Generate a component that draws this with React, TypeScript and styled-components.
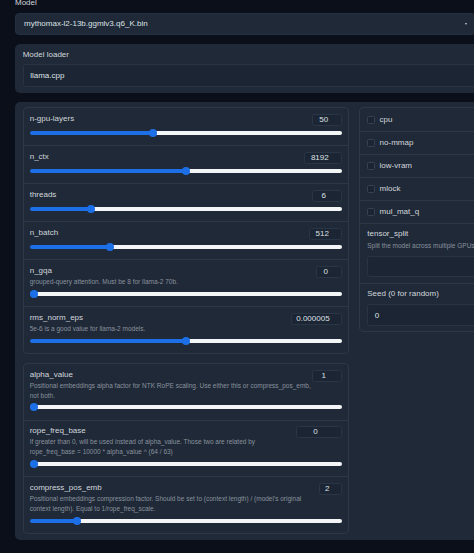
import React, { useState } from 'react';
import styled, { createGlobalStyle } from 'styled-components';

const Global = createGlobalStyle`
  html, body { margin: 0; padding: 0; background: #0b0f19; overflow: hidden; }
  body { font-family: "Liberation Sans", Arial, Helvetica, sans-serif; color: #dfe3e9; }
  * { box-sizing: border-box; }
`;

const BLUE = '#1d6fe8';
const LINE = '#2c3747';

const Page = styled.div`
  width: 640px;
  margin-left: 15px;
  display: flex;
  flex-direction: column;
`;

const TopLabel = styled.div`
  font-size: 8px;
  line-height: 10px;
  margin-top: -1.7px;
  color: #d2d6dc;
`;

const Dropdown = styled.div`
  width: 461px;
  margin-top: 4.4px;
  height: 22.3px;
  border-radius: 4px;
  background: #1f2937;
  border: 1px solid #242f3f;
  display: flex;
  align-items: center;
  justify-content: space-between;
  padding: 0 8px;
  font-size: 8px;
  color: #dde1e6;
`;

const Caret = styled.span`
  width: 0;
  height: 0;
  border-left: 1.8px solid transparent;
  border-right: 1.8px solid transparent;
  border-top: 2.4px solid #d1d5db;
`;

const Block = styled.div`
  margin-top: 9px;
  background: #1f2937;
  border-radius: 5px;
  padding: 6px 0 5.7px 7.7px;
  display: flex;
  flex-direction: column;
`;

const Label = styled.div`
  font-size: 8px;
  line-height: 10px;
  color: #d3d7dd;
  white-space: nowrap;
`;

const Info = styled.div<{ $nowrap?: boolean }>`
  margin-top: 1.2px;
  font-size: 6.5px;
  line-height: 9.8px;
  color: #8a929e;
  white-space: ${p => (p.$nowrap ? 'nowrap' : 'normal')};
`;

const TextInput = styled.div<{ $h: number; $mt: number }>`
  margin-top: ${p => p.$mt}px;
  height: ${p => p.$h}px;
  background: #1c2533;
  border: 1px solid #283345;
  border-radius: 3px;
  display: flex;
  align-items: center;
  padding-left: 6.5px;
  font-size: 8px;
  color: #dde1e6;
`;

const Panel = styled.div`
  margin-top: 9px;
  background: #1f2937;
  border-radius: 5px;
  padding: 5.6px 0 6.3px 7.7px;
  display: flex;
  gap: 10px;
  align-items: flex-start;
`;

const LeftCol = styled.div`
  width: 326.6px;
  flex: none;
  display: flex;
  flex-direction: column;
  gap: 8.7px;
`;

const RightCol = styled.div`
  flex: 1;
  display: flex;
  flex-direction: column;
`;

const Group = styled.div`
  border: 1px solid ${LINE};
  border-radius: 4px;
  display: flex;
  flex-direction: column;
`;

const SliderRowBox = styled.div`
  padding: 5.7px 6px 7.8px 6px;
  display: flex;
  flex-direction: column;
  & + & { border-top: 1px solid ${LINE}; }
`;

const Header = styled.div`
  display: flex;
  align-items: flex-start;
`;

const TextCol = styled.div`
  flex: 1;
  min-width: 0;
  display: flex;
  flex-direction: column;
`;

const NumBox = styled.div<{ $w: number }>`
  flex: none;
  width: ${p => p.$w}px;
  height: 12px;
  border: 1px solid #2a3546;
  border-radius: 2.5px;
  background: #1c2533;
  font-size: 8px;
  line-height: 10px;
  text-align: center;
  padding-right: 7px;
  color: #dde1e6;
`;

const SliderWrap = styled.div`
  margin-top: 2.5px;
  height: 9px;
  display: flex;
  align-items: center;
`;

const Range = styled.input<{ $f: number }>`
  -webkit-appearance: none;
  appearance: none;
  width: 100%;
  height: 3.7px;
  margin: 0;
  border-radius: 2px;
  outline: none;
  background: linear-gradient(
    to right,
    ${BLUE} calc(4px + ${p => p.$f} * (100% - 8px)),
    #f4f5f7 calc(4px + ${p => p.$f} * (100% - 8px))
  );
  &::-webkit-slider-thumb {
    -webkit-appearance: none;
    appearance: none;
    width: 8px;
    height: 8px;
    border-radius: 50%;
    background: ${BLUE};
    border: none;
  }
`;

const CheckRow = styled.label`
  height: 22.5px;
  display: flex;
  align-items: center;
  gap: 4.3px;
  padding-left: 7px;
  font-size: 8px;
  color: #d3d7dd;
  & + & { border-top: 1px solid ${LINE}; height: 23px; }
`;

const Check = styled.input`
  -webkit-appearance: none;
  appearance: none;
  margin: 0;
  width: 8px;
  height: 8px;
  border: 1px solid #364152;
  border-radius: 1.5px;
  background: #1b2432;
`;

const FieldCell = styled.div<{ $pt: number; $pb: number }>`
  border-top: 1px solid ${LINE};
  padding: ${p => p.$pt}px 0 ${p => p.$pb}px 7px;
  display: flex;
  flex-direction: column;
`;

type SliderProps = {
  label: string;
  info?: string;
  value: string;
  w: number;
  f: number;
};

function SliderRow({ label, info, value, w, f }: SliderProps) {
  const [v, setV] = useState(Math.round(f * 1000));
  return (
    <SliderRowBox>
      <Header>
        <TextCol>
          <Label>{label}</Label>
          {info && <Info>{info}</Info>}
        </TextCol>
        <NumBox $w={w}>{value}</NumBox>
      </Header>
      <SliderWrap>
        <Range
          type="range"
          min={0}
          max={1000}
          value={v}
          $f={v / 1000}
          onChange={e => setV(Number(e.target.value))}
        />
      </SliderWrap>
    </SliderRowBox>
  );
}

const mainSliders: SliderProps[] = [
  { label: 'n-gpu-layers', value: '50', w: 30, f: 50 / 128 },
  { label: 'n_ctx', value: '8192', w: 38, f: 0.5 },
  { label: 'threads', value: '6', w: 30, f: 6 / 32 },
  { label: 'n_batch', value: '512', w: 33, f: 0.25 },
  { label: 'n_gqa', info: 'grouped-query attention. Must be 8 for llama-2 70b.', value: '0', w: 26, f: 0 },
  { label: 'rms_norm_eps', info: '5e-6 is a good value for llama-2 models.', value: '0.000005', w: 51.7, f: 0.5 },
];

const ropeSliders: SliderProps[] = [
  {
    label: 'alpha_value',
    info: 'Positional embeddings alpha factor for NTK RoPE scaling. Use either this or compress_pos_emb, not both.',
    value: '1',
    w: 30,
    f: 0,
  },
  {
    label: 'rope_freq_base',
    info: 'If greater than 0, will be used instead of alpha_value. Those two are related by rope_freq_base = 10000 * alpha_value ^ (64 / 63)',
    value: '0',
    w: 46.7,
    f: 0,
  },
  {
    label: 'compress_pos_emb',
    info: "Positional embeddings compression factor. Should be set to (context length) / (model's original context length). Equal to 1/rope_freq_scale.",
    value: '2',
    w: 23.3,
    f: 1 / 7,
  },
];

const flags = ['cpu', 'no-mmap', 'low-vram', 'mlock', 'mul_mat_q'];

export default function App() {
  return (
    <>
      <Global />
      <Page>
        <TopLabel>Model</TopLabel>
        <Dropdown>
          <span>mythomax-l2-13b.ggmlv3.q6_K.bin</span>
          <Caret />
        </Dropdown>
        <Block>
          <Label>Model loader</Label>
          <TextInput $h={23} $mt={4}>llama.cpp</TextInput>
        </Block>
        <Panel>
          <LeftCol>
            <Group>
              {mainSliders.map(s => (
                <SliderRow key={s.label} {...s} />
              ))}
            </Group>
            <Group>
              {ropeSliders.map(s => (
                <SliderRow key={s.label} {...s} />
              ))}
            </Group>
          </LeftCol>
          <RightCol>
            <Group>
              {flags.map(fl => (
                <CheckRow key={fl}>
                  <Check type="checkbox" />
                  {fl}
                </CheckRow>
              ))}
              <FieldCell $pt={5.7} $pb={5.7}>
                <Label>tensor_split</Label>
                <Info $nowrap>Split the model across multiple GPUs, comma-separated. Example: 18,17</Info>
                <TextInput $h={21} $mt={5.8} />
              </FieldCell>
              <FieldCell $pt={4.6} $pb={4.7}>
                <Label>Seed (0 for random)</Label>
                <TextInput $h={22.3} $mt={5.4}>0</TextInput>
              </FieldCell>
            </Group>
          </RightCol>
        </Panel>
      </Page>
    </>
  );
}
